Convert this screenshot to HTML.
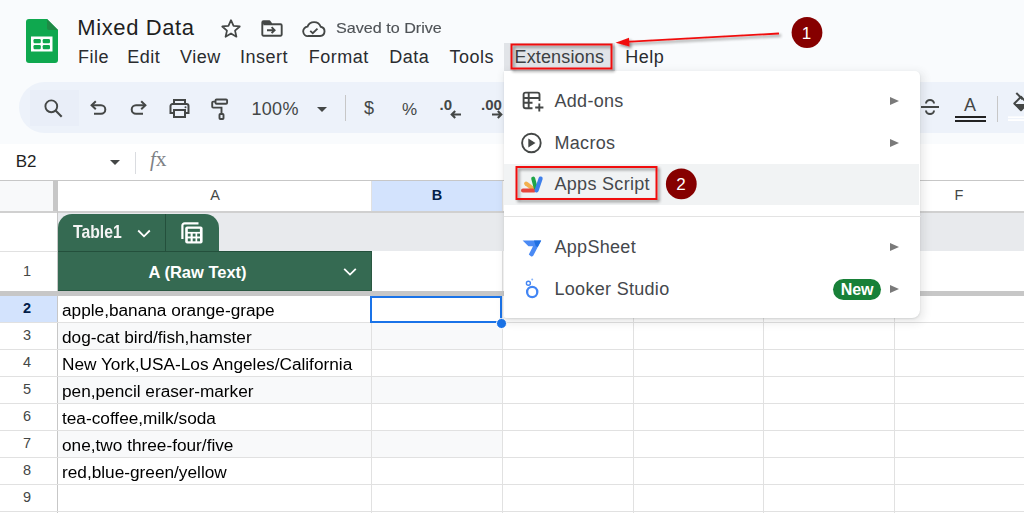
<!DOCTYPE html>
<html><head><meta charset="utf-8">
<style>
*{box-sizing:border-box;margin:0;padding:0}
html,body{width:1024px;height:513px;overflow:hidden;background:#fff;font-family:"Liberation Sans",sans-serif}
.a{position:absolute}
.t{position:absolute;white-space:pre;line-height:1}
#top{left:0;top:0;width:1024px;height:144px;background:#f9fbfd}
.mi{font-size:18px;color:#2a2c2f;top:48px;letter-spacing:0.5px}
.cell{font-size:16px;color:#000;left:61.6px;transform:scaleX(1.077);transform-origin:0 0}
.rn{font-size:14.5px;color:#444746;width:54px;text-align:center;left:0}
.hl{background:#e1e1e1}
.mt{font-size:18px;color:#45484c;left:554.5px;letter-spacing:0.3px}
.arr{width:0;height:0;border-top:4.5px solid transparent;border-bottom:4.5px solid transparent;border-left:9px solid #7a7a7a}
</style></head><body>
<div id="top" class="a"></div>

<!-- Sheets logo -->
<svg class="a" style="left:26px;top:18.5px" width="32" height="44" viewBox="0 0 32 44">
  <path d="M3 0H21L32 11V41a3 3 0 0 1-3 3H3a3 3 0 0 1-3-3V3a3 3 0 0 1 3-3z" fill="#0fa84f"/>
  <path d="M21 0L32 11H23a2 2 0 0 1-2-2z" fill="#1e8a45"/>
  <rect x="5" y="17.5" width="21.5" height="15" fill="#fff"/>
  <rect x="7.5" y="20" width="7.3" height="4.3" rx="1.2" fill="#0fa84f"/>
  <rect x="16.7" y="20" width="7.3" height="4.3" rx="1.2" fill="#0fa84f"/>
  <rect x="7.5" y="26" width="7.3" height="4.3" rx="1.2" fill="#0fa84f"/>
  <rect x="16.7" y="26" width="7.3" height="4.3" rx="1.2" fill="#0fa84f"/>
</svg>

<div class="t" style="left:77.3px;top:17.4px;font-size:22px;letter-spacing:0.6px;color:#1f1f1f">Mixed Data</div>
<!-- star -->
<svg class="a" style="left:219px;top:18px" width="24" height="21" viewBox="0 0 24 24">
  <path d="M12 2.5l2.9 6.6 7.1.6-5.4 4.7 1.6 7-6.2-3.7-6.2 3.7 1.6-7L2 9.7l7.1-.6z" fill="none" stroke="#444746" stroke-width="2" stroke-linejoin="round"/>
</svg>
<!-- folder move -->
<svg class="a" style="left:261px;top:20px" width="22" height="17" viewBox="0 0 22 17">
  <path d="M2.5 4.2H19.5a1.2 1.2 0 0 1 1.2 1.2V14.6a1.2 1.2 0 0 1-1.2 1.2H2.5a1.2 1.2 0 0 1-1.2-1.2V2.4a1.2 1.2 0 0 1 1.2-1.2H8.5l2.2 3" fill="none" stroke="#444746" stroke-width="1.9" stroke-linejoin="round"/>
  <path d="M1.5 1.5H8.8L10.5 3.9H1.5z" fill="#444746"/>
  <path d="M6 10.2h7.5M10.6 7.2l3 3-3 3" fill="none" stroke="#444746" stroke-width="1.9"/>
</svg>
<!-- cloud done -->
<svg class="a" style="left:301.5px;top:20.5px" width="24" height="16" viewBox="0 0 25 17">
  <path d="M6.5 16H19a5 5 0 0 0 .6-9.9A7.5 7.5 0 0 0 5.6 6 5 5 0 0 0 6.5 16z" fill="none" stroke="#444746" stroke-width="2"/>
  <path d="M8.5 10.5l2.7 2.5 5-5" fill="none" stroke="#444746" stroke-width="1.9"/>
</svg>
<div class="t" style="left:336px;top:20.3px;font-size:15px;color:#4f5357;transform:scaleX(1.075);transform-origin:0 0;-webkit-text-stroke:0.15px #4f5357">Saved to Drive</div>

<!-- menu bar -->
<div class="t mi" style="left:78px">File</div>
<div class="t mi" style="left:127.3px">Edit</div>
<div class="t mi" style="left:180px">View</div>
<div class="t mi" style="left:240px">Insert</div>
<div class="t mi" style="left:308.7px">Format</div>
<div class="t mi" style="left:389.2px">Data</div>
<div class="t mi" style="left:449.5px">Tools</div>
<div class="a" style="left:504px;top:43px;width:111px;height:28px;background:#e1e4e8"></div>
<div class="t mi" style="left:514.5px;color:#3c4043;letter-spacing:0.15px">Extensions</div>
<div class="t mi" style="left:625.2px">Help</div>

<!-- toolbar pill -->
<div class="a" style="left:19px;top:81.5px;width:1100px;height:51.5px;border-radius:26px;background:#edf2fa"></div>
<div class="a" style="left:30px;top:90px;width:49px;height:36px;background:#e9eef8"></div>
<!-- search -->
<svg class="a" style="left:44px;top:98.5px" width="19" height="19" viewBox="0 0 19 19">
  <circle cx="7.3" cy="7.3" r="5.9" fill="none" stroke="#444746" stroke-width="1.9"/>
  <path d="M11.5 11.5l6.2 6.2" stroke="#444746" stroke-width="2.1"/>
</svg>
<!-- undo -->
<svg class="a" style="left:89.5px;top:100.3px" width="17" height="15" viewBox="0 0 17 15">
  <path d="M2.5 5.2h8.5a4.3 4.3 0 0 1 0 8.6H4" fill="none" stroke="#444746" stroke-width="2"/>
  <path d="M5.8 1.2L1.6 5.2l4.2 4" fill="none" stroke="#444746" stroke-width="2"/>
</svg>
<!-- redo -->
<svg class="a" style="left:130px;top:100.3px" width="17" height="15" viewBox="0 0 17 15">
  <path d="M14.5 5.2H6a4.3 4.3 0 0 0 0 8.6h7" fill="none" stroke="#444746" stroke-width="2"/>
  <path d="M11.2 1.2l4.2 4-4.2 4" fill="none" stroke="#444746" stroke-width="2"/>
</svg>
<!-- print -->
<svg class="a" style="left:169px;top:98.5px" width="21" height="19" viewBox="0 0 21 19">
  <path d="M5 5V1h11v4" fill="none" stroke="#444746" stroke-width="2"/>
  <path d="M5 14H1.5V7a2 2 0 0 1 2-2h14a2 2 0 0 1 2 2v7H16" fill="none" stroke="#444746" stroke-width="2"/>
  <rect x="5" y="11" width="11" height="7" fill="none" stroke="#444746" stroke-width="2"/>
  <circle cx="16.5" cy="8.3" r="1" fill="#444746"/>
</svg>
<!-- paint format -->
<svg class="a" style="left:208px;top:96px" width="24" height="26" viewBox="208 96 24 26">
  <rect x="215.5" y="99.5" width="11.6" height="4.2" rx="1" fill="none" stroke="#444746" stroke-width="1.9"/>
  <path d="M215.5 101.6H213.2a1 1 0 0 0-1 1V106.6a1 1 0 0 0 1 1H221.5V113.5" fill="none" stroke="#444746" stroke-width="1.9"/>
  <rect x="219.5" y="114" width="4" height="5" rx="0.8" fill="none" stroke="#444746" stroke-width="1.9"/>
</svg>
<div class="t" style="left:251.5px;top:99.8px;font-size:18px;letter-spacing:0.3px;color:#444746">100%</div>
<div class="a" style="left:317px;top:106.5px;width:0;height:0;border-left:5px solid transparent;border-right:5px solid transparent;border-top:5px solid #444746"></div>
<div class="a" style="left:344.5px;top:95px;width:1px;height:26px;background:#c7c7c7"></div>
<div class="t" style="left:364px;top:98.5px;font-size:18px;color:#444746">$</div>
<div class="t" style="left:402px;top:100.5px;font-size:17px;color:#444746">%</div>
<div class="t" style="left:439.5px;top:96.5px;font-size:15px;font-weight:bold;color:#444746">.0</div>
<svg class="a" style="left:450px;top:110px" width="12" height="9" viewBox="0 0 12 9"><path d="M11 4.5H2M5.2 1L1.7 4.5 5.2 8" fill="none" stroke="#444746" stroke-width="2.1"/></svg>
<div class="t" style="left:481px;top:96.5px;font-size:15px;font-weight:bold;color:#444746">.00</div>
<svg class="a" style="left:491px;top:110px" width="12" height="9" viewBox="0 0 12 9"><path d="M1 4.5h9M6.8 1l3.5 3.5L6.8 8" fill="none" stroke="#444746" stroke-width="2.1"/></svg>
<!-- right toolbar icons -->
<svg class="a" style="left:919.5px;top:99px" width="20" height="16" viewBox="0 0 20 16">
  <path d="M1 8h18" stroke="#444746" stroke-width="2"/>
  <path d="M14 4.5a4 3.5 0 0 0-8 0M6 11.5a4 3.5 0 0 0 8 0" fill="none" stroke="#444746" stroke-width="2"/>
</svg>
<div class="t" style="left:964px;top:95.5px;font-size:18px;color:#444746">A</div>
<div class="a" style="left:955px;top:116px;width:31px;height:2px;background:#222"></div>
<div class="a" style="left:955px;top:119.5px;width:31px;height:2px;background:#222"></div>
<div class="a" style="left:997px;top:95.5px;width:1px;height:26px;background:#c7c7c7"></div>
<svg class="a" style="left:1005px;top:90px" width="19" height="34" viewBox="1005 90 19 34">
  <path d="M1014.3 103.5L1021 96.8 1027.7 103.5 1021 110.2z" fill="none" stroke="#444746" stroke-width="2" stroke-linejoin="round"/>
  <path d="M1014.5 104H1027.5L1021 110.5z" fill="#444746"/>
  <path d="M1016.3 93L1022.5 99.2" stroke="#444746" stroke-width="2"/>
  <rect x="1008" y="116.4" width="16" height="1.8" fill="#fff"/>
  <rect x="1008" y="119.2" width="16" height="1.8" fill="#fff"/>
</svg>

<!-- formula bar -->
<div class="a" style="left:0;top:144px;width:1024px;height:37px;background:#fff;border-bottom:1px solid #c7c7c7"></div>
<div class="t" style="left:15.7px;top:153px;font-size:17px;color:#1f1f1f">B2</div>
<div class="a" style="left:110px;top:160px;width:0;height:0;border-left:5px solid transparent;border-right:5px solid transparent;border-top:5px solid #444746"></div>
<div class="a" style="left:134.5px;top:152px;width:1px;height:22px;background:#dadce0"></div>
<div class="t" style="left:150px;top:149.3px;font-size:21.5px;font-family:'Liberation Serif',serif;color:#7d8185"><i style="font-size:20.5px">f</i><span style="letter-spacing:0">x</span></div>

<!-- column header row -->
<div class="a" style="left:0;top:181px;width:1024px;height:32px;background:#fff;border-bottom:2px solid #d0d0d0"></div>
<div class="a" style="left:0;top:181px;width:53px;height:30px;background:#f8f9fa"></div>
<div class="a" style="left:53px;top:181px;width:5px;height:30px;background:#c7c7c7"></div>
<div class="a" style="left:371px;top:181px;width:131px;height:30px;background:#d3e3fd"></div>
<div class="a" style="left:371px;top:181px;width:1px;height:30px;background:#e1e1e1"></div>
<div class="a" style="left:502px;top:181px;width:1px;height:30px;background:#e1e1e1"></div>
<div class="a" style="left:632.5px;top:181px;width:1px;height:30px;background:#e1e1e1"></div>
<div class="a" style="left:763px;top:181px;width:1px;height:30px;background:#e1e1e1"></div>
<div class="a" style="left:894px;top:181px;width:1px;height:30px;background:#e1e1e1"></div>
<div class="t" style="left:0;top:188.4px;text-align:center;font-size:14.5px;color:#444746;left:0;padding-left:58px;width:372px">A</div>
<div class="t" style="left:372px;top:188.4px;width:130px;text-align:center;font-size:14.5px;font-weight:bold;color:#041e49">B</div>
<div class="t" style="left:894px;top:188.4px;width:130px;text-align:center;font-size:14.5px;color:#444746">F</div>

<!-- table banner row -->
<div class="a" style="left:58px;top:213px;width:966px;height:38px;background:#e8eaed"></div>
<div class="a" style="left:58px;top:213.5px;width:161px;height:38px;background:#356a52;border-radius:14px 14px 0 0"></div>
<div class="a" style="left:165px;top:213.5px;width:1px;height:38px;background:#24503c"></div>
<div class="t" style="left:72.8px;top:223.2px;font-size:18.5px;font-weight:bold;color:#f4f4f4;transform:scaleX(0.85);transform-origin:0 0">Table1</div>
<svg class="a" style="left:137px;top:229px" width="14" height="9" viewBox="0 0 14 9"><path d="M1.2 1.5L7 7.3l5.8-5.8" fill="none" stroke="#fff" stroke-width="1.8"/></svg>
<svg class="a" style="left:181px;top:221.5px" width="22" height="22" viewBox="0 0 22 22">
  <path d="M1.4 17V3.6a2.2 2.2 0 0 1 2.2-2.2H17.5" fill="none" stroke="#fff" stroke-width="2.2"/>
  <rect x="4.2" y="4.4" width="17.4" height="17.1" rx="2" fill="#fff"/>
  <g fill="#356a52"><rect x="6.8" y="6.8" width="12.1" height="3.1"/>
  <rect x="6.8" y="11.6" width="2.8" height="2.9"/><rect x="11.7" y="11.6" width="2.8" height="2.9"/><rect x="16.2" y="11.6" width="2.8" height="2.9"/>
  <rect x="6.8" y="16.4" width="2.8" height="2.9"/><rect x="11.7" y="16.4" width="2.8" height="2.9"/><rect x="16.2" y="16.4" width="2.8" height="2.9"/></g>
</svg>
<div class="a" style="left:0;top:251px;width:57px;height:1px;background:#e1e1e1"></div>
<div class="a" style="left:57px;top:211px;width:1px;height:302px;background:#c7c7c7"></div>

<!-- row 1 -->
<div class="a" style="left:58px;top:251px;width:314px;height:40px;background:#356a52;border-top:1px solid #24503c;border-right:1px solid #2a5842;border-bottom:1px solid #2a5842"></div>
<div class="t" style="left:148.5px;top:264px;font-size:16.5px;font-weight:bold;color:#fff">A (Raw Text)</div>
<svg class="a" style="left:343px;top:267px" width="14" height="10" viewBox="0 0 14 10"><path d="M1.2 1.8L7 7.6l5.8-5.8" fill="none" stroke="#fff" stroke-width="1.8"/></svg>
<div class="t rn" style="top:264.1px">1</div>
<div class="a" style="left:502px;top:251px;width:1px;height:40px;background:#e1e1e1"></div>
<div class="a" style="left:0;top:291px;width:1024px;height:5px;background:#c7c7c7"></div>

<!-- body rows -->
<div class="a" style="left:0;top:296px;width:57px;height:27px;background:#d3e3fd"></div>
<div class="a" style="left:58px;top:323px;width:444px;height:27px;background:#f8f9fa"></div>
<div class="a" style="left:58px;top:377px;width:444px;height:27px;background:#f8f9fa"></div>
<div class="a" style="left:58px;top:431px;width:444px;height:27px;background:#f8f9fa"></div>
<!-- horizontal grid lines -->
<div class="a hl" style="left:0;top:322px;width:1024px;height:1px"></div>
<div class="a hl" style="left:0;top:349px;width:1024px;height:1px"></div>
<div class="a hl" style="left:0;top:376px;width:1024px;height:1px"></div>
<div class="a hl" style="left:0;top:403px;width:1024px;height:1px"></div>
<div class="a hl" style="left:0;top:430px;width:1024px;height:1px"></div>
<div class="a hl" style="left:0;top:457px;width:1024px;height:1px"></div>
<div class="a hl" style="left:0;top:484px;width:1024px;height:1px"></div>
<div class="a hl" style="left:0;top:511px;width:1024px;height:1px"></div>
<!-- vertical grid lines -->
<div class="a hl" style="left:371px;top:296px;width:1px;height:217px"></div>
<div class="a hl" style="left:502px;top:296px;width:1px;height:217px"></div>
<div class="a hl" style="left:632.5px;top:296px;width:1px;height:217px"></div>
<div class="a hl" style="left:763px;top:296px;width:1px;height:217px"></div>
<div class="a hl" style="left:894px;top:296px;width:1px;height:217px"></div>

<div class="t rn" style="top:300.6px;font-weight:bold;color:#041e49">2</div>
<div class="t rn" style="top:327.6px">3</div>
<div class="t rn" style="top:354.6px">4</div>
<div class="t rn" style="top:381.6px">5</div>
<div class="t rn" style="top:408.6px">6</div>
<div class="t rn" style="top:435.6px">7</div>
<div class="t rn" style="top:462.6px">8</div>
<div class="t rn" style="top:489.6px">9</div>

<div class="t cell" style="top:303.0px">apple,banana orange-grape</div>
<div class="t cell" style="top:330.0px">dog-cat bird/fish,hamster</div>
<div class="t cell" style="top:357.0px">New York,USA-Los Angeles/California</div>
<div class="t cell" style="top:384.0px">pen,pencil eraser-marker</div>
<div class="t cell" style="top:411.0px">tea-coffee,milk/soda</div>
<div class="t cell" style="top:438.0px">one,two three-four/five</div>
<div class="t cell" style="top:465.0px">red,blue-green/yellow</div>

<!-- selection -->
<div class="a" style="left:370px;top:296px;width:132px;height:27px;border:2px solid #1a73e8"></div>
<div class="a" style="left:496px;top:318px;width:11px;height:11px;border-radius:50%;background:#1a73e8;border:1px solid #fff"></div>

<!-- dropdown menu -->
<div class="a" style="left:503.5px;top:70.5px;width:416.7px;height:247px;background:#fff;border-radius:0 5px 8px 2px;box-shadow:0 1px 2px rgba(60,64,67,.14),2px 3px 9px 2px rgba(60,64,67,.11)"></div>
<div class="a" style="left:503.5px;top:164px;width:415px;height:40.5px;background:#f1f3f4"></div>
<div class="a" style="left:503.5px;top:215.5px;width:417px;height:1.5px;background:#e3e3e3"></div>

<!-- add-ons icon -->
<svg class="a" style="left:520px;top:90px" width="26" height="24" viewBox="520 90 26 24">
  <path d="M539.5 101V94.6a2 2 0 0 0-2-2H525.6a2 2 0 0 0-2 2V106.2a2 2 0 0 0 2 2H532.5" fill="none" stroke="#444746" stroke-width="1.9"/>
  <path d="M523.6 98H539.5M523.6 102.8H532.5M528.7 92.6V108.2" fill="none" stroke="#444746" stroke-width="1.9"/>
  <path d="M539.3 103.4V111.6M535.2 107.5H543.4" stroke="#444746" stroke-width="1.9"/>
</svg>
<div class="t mt" style="top:92.3px">Add-ons</div>
<div class="a arr" style="left:890px;top:97px"></div>

<!-- macros icon -->
<svg class="a" style="left:520px;top:132px" width="23" height="23" viewBox="520 132 23 23">
  <circle cx="531.4" cy="143" r="9.3" fill="none" stroke="#444746" stroke-width="1.9"/>
  <path d="M528.3 138.6v8.8l7.2-4.4z" fill="#444746"/>
</svg>
<div class="t mt" style="top:133.5px">Macros</div>
<div class="a arr" style="left:890px;top:138.5px"></div>

<!-- apps script icon -->
<svg class="a" style="left:518px;top:172px" width="28" height="24" viewBox="518 172 28 24">
  <path d="M526.2 183.6L534.2 189.6" stroke="#f2b04f" stroke-width="4.2" stroke-linecap="round"/>
  <path d="M523 190.6H534.2" stroke="#e6473d" stroke-width="4" stroke-linecap="round"/>
  <path d="M533.2 178.6L535.6 187.6" stroke="#1fa548" stroke-width="4" stroke-linecap="round"/>
  <path d="M540.6 178.6L536.6 190.4" stroke="#3d7fea" stroke-width="4.2" stroke-linecap="round"/>
</svg>
<div class="t mt" style="top:174.8px">Apps Script</div>

<!-- appsheet icon -->
<svg class="a" style="left:522px;top:239.5px" width="20" height="17" viewBox="0 0 20 17">
  <path d="M0.6 0.5H19.2L11.2 15.8Q10 17.2 8.6 16L6.8 14.6L11 6.3H6.5Z" fill="#4a8af4"/>
  <path d="M12 0.5H19.2L15.8 7 13.8 6.3z" fill="#1f6fe0"/>
</svg>
<div class="t mt" style="top:237.8px">AppSheet</div>
<div class="a arr" style="left:890px;top:243px"></div>

<!-- looker icon -->
<svg class="a" style="left:524px;top:278px" width="17" height="22" viewBox="0 0 17 22">
  <circle cx="8.2" cy="14" r="5.1" fill="none" stroke="#4285f4" stroke-width="2.3"/>
  <circle cx="4.4" cy="5.3" r="2" fill="none" stroke="#4285f4" stroke-width="1.4"/>
  <circle cx="8.2" cy="1.6" r="1" fill="#8ab4f8"/>
</svg>
<div class="t mt" style="top:279.5px">Looker Studio</div>
<div class="a" style="left:833px;top:278.5px;width:48px;height:21px;border-radius:10.5px;background:#188038"></div>
<div class="t" style="left:833px;top:281.6px;width:48px;text-align:center;font-size:16px;font-weight:bold;letter-spacing:-0.2px;color:#fff">New</div>
<div class="a arr" style="left:890px;top:284.5px"></div>

<!-- annotations -->
<svg class="a" style="left:0;top:0" width="1024" height="513" viewBox="0 0 1024 513">
  <defs>
    <filter id="sh" x="-20%" y="-50%" width="140%" height="200%">
      <feGaussianBlur in="SourceAlpha" stdDeviation="1.5"/>
      <feOffset dx="2" dy="2" result="b"/>
      <feComponentTransfer><feFuncA type="linear" slope="0.45"/></feComponentTransfer>
      <feMerge><feMergeNode/><feMergeNode in="SourceGraphic"/></feMerge>
    </filter>
  </defs>
  <g filter="url(#sh)">
    <path d="M779 33.5L626 41.9" stroke="#f01010" stroke-width="1.8"/>
    <path d="M615.5 42.7L629 37.8 629.5 46.5z" fill="#f01010"/>
  </g>
  <g filter="url(#sh)">
    <rect x="511.5" y="44.5" width="100" height="24" fill="none" stroke="#f01010" stroke-width="2"/>
  </g>
  <g filter="url(#sh)">
    <rect x="516.5" y="167" width="140" height="32" fill="none" stroke="#f01010" stroke-width="2"/>
  </g>
  <circle cx="807" cy="32.5" r="15.4" fill="#860000"/>
  <circle cx="681.3" cy="183.9" r="15.4" fill="#860000"/>
  <text x="806.5" y="38.5" text-anchor="middle" style="font-family:'Liberation Sans',sans-serif;font-size:17px" fill="#fff">1</text>
  <text x="681" y="189.8" text-anchor="middle" style="font-family:'Liberation Sans',sans-serif;font-size:17px" fill="#fff">2</text>
</svg>
</body></html>
